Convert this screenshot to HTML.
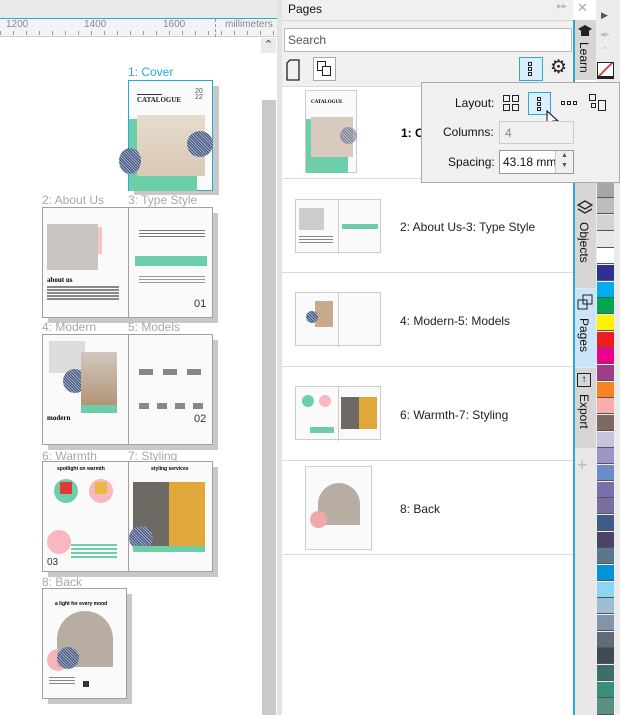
<!DOCTYPE html>
<html><head><meta charset="utf-8"><style>
*{margin:0;padding:0;box-sizing:border-box}
body{width:620px;height:715px;overflow:hidden;background:#fff;font-family:"Liberation Sans",sans-serif;position:relative}
.a{position:absolute}
.lbl{position:absolute;font-size:12px;color:#a8a8a8}
.pg{position:absolute;background:#fafafa;border:1px solid #a0a0a0}
.sh{position:absolute;background:#c8c8c8}
.ln{position:absolute;height:2px;background:#8a8a8a}
.ph{position:absolute;background:#d8cbbd}
.gr{position:absolute;background:#6ccfa9}
.circ{position:absolute;border-radius:50%;background:repeating-linear-gradient(45deg,#3c4f7a 0 1px,#a9b4c8 1px 2px)}
.sep{position:absolute;left:282px;width:291px;height:1px;background:#dcdcdc}
.rt{position:absolute;left:400px;font-size:12px;color:#222}
.sw{position:absolute;left:597px;width:17px;height:16px;border-bottom:1px solid #555}
.vt{position:absolute;writing-mode:vertical-rl;font-size:12px;color:#111}
</style></head><body>
<div class="a" style="left:0;top:0;width:278px;height:18px;background:#e9e9e9"></div>
<div class="a" style="left:0;top:18px;width:278px;height:1px;background:#29a8e0"></div>
<div class="a" style="left:0;top:19px;width:278px;height:18px;background:#f3f3f3;border-bottom:1px solid #d0d0d0"></div>
<div class="a" style="left:6px;top:19px;font-size:10px;color:#888">1200</div>
<div class="a" style="left:84px;top:19px;font-size:10px;color:#888">1400</div>
<div class="a" style="left:163px;top:19px;font-size:10px;color:#888">1600</div>
<div class="a" style="left:225px;top:19px;font-size:10px;color:#888">millimeters</div>
<div class="a" style="left:0;top:31px;width:278px;height:4px;background:repeating-linear-gradient(90deg,#999 0 1px,transparent 1px 13px)"></div>
<div class="a" style="left:215px;top:19px;width:1px;height:18px;border-left:1px dashed #999"></div>
<div class="a" style="left:261px;top:38px;width:15px;height:15px;background:#eaeaea;font-size:11px;text-align:center;color:#333;line-height:15px">&#8963;</div>
<div class="a" style="left:262px;top:100px;width:14px;height:615px;background:#c9c9c9"></div>
<div class="a" style="left:277px;top:0;width:5px;height:715px;background:#e3e3e3"></div>

<div class="lbl" style="left:128px;top:65px;color:#29a8e0">1: Cover</div>
<div class="sh" style="left:134px;top:86px;width:85px;height:109px"></div>
<div class="pg" style="left:128px;top:80px;width:85px;height:111px;border-color:#29a8e0">
 <div class="a" style="left:8px;top:13px;width:25px;height:1px;background:#333"></div>
 <div class="a" style="left:8px;top:15px;font:bold 7px 'Liberation Serif',serif;color:#222">CATALOGUE</div>
 <div class="a" style="left:66px;top:8px;font-size:7px;line-height:6px;color:#555">20<br>22</div>
 <div class="gr" style="left:0;top:38px;width:68px;height:72px"></div>
 <div class="ph" style="left:8px;top:34px;width:68px;height:61px;background:linear-gradient(#e8dccd,#d9c8b5)"></div>
 <div class="circ" style="left:58px;top:50px;width:26px;height:26px"></div>
 <div class="circ" style="left:-10px;top:67px;width:22px;height:26px"></div>
</div>

<div class="lbl" style="left:42px;top:193px">2: About Us</div>
<div class="lbl" style="left:128px;top:193px">3: Type Style</div>
<div class="sh" style="left:48px;top:213px;width:170px;height:110px"></div>
<div class="pg" style="left:42px;top:207px;width:171px;height:111px">
 <div class="ph" style="left:4px;top:16px;width:51px;height:46px;background:#c9c5c0"></div>
 <div class="a" style="left:55px;top:19px;width:4px;height:27px;background:#f7c2c8"></div>
 <div class="a" style="left:4px;top:68px;font:bold 7px 'Liberation Serif',serif">about us</div>
 <div class="ln" style="left:4px;top:78px;width:72px;height:14px;background:repeating-linear-gradient(#888 0 2px,transparent 2px 3px)"></div>
 <div class="a" style="left:85px;top:0;width:1px;height:110px;background:#a0a0a0"></div>
 <div class="gr" style="left:92px;top:48px;width:72px;height:10px"></div>
 <div class="ln" style="left:96px;top:22px;width:66px;height:8px;background:repeating-linear-gradient(#777 0 1px,transparent 1px 3px)"></div>
 <div class="ln" style="left:96px;top:68px;width:66px;height:8px;background:repeating-linear-gradient(#999 0 1px,transparent 1px 3px)"></div>
 <div class="a" style="left:151px;top:90px;font-size:11px;color:#333">01</div>
</div>

<div class="lbl" style="left:42px;top:320px">4: Modern</div>
<div class="lbl" style="left:128px;top:320px">5: Models</div>
<div class="sh" style="left:48px;top:340px;width:170px;height:110px"></div>
<div class="pg" style="left:42px;top:334px;width:171px;height:111px">
 <div class="ph" style="left:6px;top:6px;width:36px;height:32px;background:#ddd"></div>
 <div class="circ" style="left:20px;top:34px;width:24px;height:24px"></div>
 <div class="ph" style="left:38px;top:17px;width:36px;height:55px;background:linear-gradient(#cfc9c0,#b39272)"></div>
 <div class="gr" style="left:38px;top:70px;width:36px;height:8px"></div>
 <div class="a" style="left:4px;top:79px;font:bold 7px 'Liberation Serif',serif">modern</div>
 <div class="a" style="left:85px;top:0;width:1px;height:110px;background:#a0a0a0"></div>
 <div class="ln" style="left:96px;top:34px;width:66px;height:6px;background:repeating-linear-gradient(90deg,#888 0 14px,transparent 14px 24px)"></div>
 <div class="ln" style="left:96px;top:68px;width:66px;height:6px;background:repeating-linear-gradient(90deg,#888 0 10px,transparent 10px 18px)"></div>
 <div class="a" style="left:151px;top:78px;font-size:11px;color:#333">02</div>
</div>

<div class="lbl" style="left:42px;top:449px">6: Warmth</div>
<div class="lbl" style="left:128px;top:449px">7: Styling</div>
<div class="sh" style="left:48px;top:467px;width:170px;height:110px"></div>
<div class="pg" style="left:42px;top:461px;width:171px;height:111px">
 <div class="a" style="left:14px;top:4px;font:bold 5px sans-serif">spotlight on warmth</div>
 <div class="a" style="left:11px;top:17px;width:24px;height:24px;border-radius:50%;background:#6ccfa9"></div>
 <div class="a" style="left:17px;top:20px;width:12px;height:12px;background:#e23a3a"></div>
 <div class="a" style="left:46px;top:17px;width:24px;height:24px;border-radius:50%;background:#f7b8c0"></div>
 <div class="a" style="left:52px;top:20px;width:12px;height:12px;background:#e8b845"></div>
 <div class="a" style="left:4px;top:68px;width:24px;height:24px;border-radius:50%;background:#f7b8c0"></div>
 <div class="gr" style="left:28px;top:82px;width:46px;height:14px;background:repeating-linear-gradient(#6ccfa9 0 2px,transparent 2px 4px)"></div>
 <div class="a" style="left:4px;top:95px;font-size:10px;color:#333">03</div>
 <div class="a" style="left:85px;top:0;width:1px;height:110px;background:#a0a0a0"></div>
 <div class="a" style="left:108px;top:4px;font:bold 5px sans-serif">styling services</div>
 <div class="ph" style="left:90px;top:20px;width:72px;height:64px;background:linear-gradient(90deg,#6e6a63 0 50%,#e0a73a 50%)"></div>
 <div class="circ" style="left:86px;top:64px;width:24px;height:24px"></div>
 <div class="gr" style="left:90px;top:84px;width:72px;height:6px"></div>
</div>

<div class="lbl" style="left:42px;top:575px">8: Back</div>
<div class="sh" style="left:48px;top:594px;width:84px;height:110px"></div>
<div class="pg" style="left:42px;top:588px;width:85px;height:111px">
 <div class="a" style="left:12px;top:12px;font:bold 5px sans-serif">a light for every mood</div>
 <div class="ph" style="left:14px;top:22px;width:56px;height:56px;border-radius:28px 28px 0 0;background:#b8ada3"></div>
 <div class="a" style="left:4px;top:60px;width:22px;height:22px;border-radius:50%;background:#f2a8a8;opacity:.8"></div>
 <div class="circ" style="left:14px;top:58px;width:22px;height:22px"></div>
 <div class="ln" style="left:6px;top:88px;width:26px;height:8px;background:repeating-linear-gradient(#888 0 1px,transparent 1px 3px)"></div>
 <div class="a" style="left:40px;top:92px;width:6px;height:6px;background:#333"></div>
</div>

<div class="a" style="left:282px;top:0;width:291px;height:86px;background:#f0f0f0"></div>
<div class="a" style="left:288px;top:2px;font-size:12px;color:#111">Pages</div>
<div class="a" style="left:557px;top:1px;font-size:10px;color:#bbb">&#9656;&#9656;</div>
<div class="a" style="left:577px;top:0px;font-size:13px;color:#aaa">&#10005;</div>
<div class="a" style="left:282px;top:20px;width:291px;height:1px;background:#d5d5d5"></div>
<div class="a" style="left:284px;top:28px;width:288px;height:24px;background:#fff;border:1px solid #bbb;font-size:12px;color:#555;padding:4px 3px">Search</div>
<svg class="a" style="left:286px;top:59px" width="14" height="22"><path d="M4 1H13V21H1V4Z" fill="none" stroke="#222" stroke-width="1.3"/></svg>
<div class="a" style="left:313px;top:57px;width:23px;height:24px;border:1px solid #aaa;background:#fff"></div>
<div class="a" style="left:317px;top:61px;width:9px;height:10px;border:1.3px solid #222"></div>
<div class="a" style="left:322px;top:66px;width:9px;height:10px;border:1.3px solid #222;background:#fff"></div>
<div class="a" style="left:519px;top:57px;width:24px;height:24px;border:1px solid #29a8e0;background:#dbeefb"></div>
<svg class="a" style="left:527px;top:61px" width="8" height="16"><rect x="1.5" y="1.5" width="3" height="3" fill="none" stroke="#222"/><rect x="1.5" y="6.5" width="3" height="3" fill="none" stroke="#222"/><rect x="1.5" y="11.5" width="3" height="3" fill="none" stroke="#222"/></svg>
<div class="a" style="left:550px;top:56px;font-size:19px;color:#222">&#9881;</div>
<div class="a" style="left:282px;top:86px;width:291px;height:1px;background:#dcdcdc"></div>

<div class="pg" style="left:305px;top:90px;width:52px;height:83px;border-color:#ccc">
 <div class="a" style="left:5px;top:9px;font:bold 5px 'Liberation Serif',serif">CATALOGUE</div>
 <div class="gr" style="left:0;top:28px;width:42px;height:54px"></div>
 <div class="ph" style="left:5px;top:26px;width:42px;height:40px"></div>
 <div class="circ" style="left:34px;top:36px;width:17px;height:17px;opacity:.6"></div>
</div>
<div class="a" style="left:401px;top:126px;font-size:12px;font-weight:bold">1: C</div>
<div class="sep" style="top:178px"></div>
<div class="pg" style="left:295px;top:199px;width:86px;height:54px;border-color:#ccc">
 <div class="ph" style="left:3px;top:8px;width:25px;height:22px;background:#ccc"></div>
 <div class="a" style="left:42px;top:0;width:1px;height:54px;background:#ccc"></div>
 <div class="gr" style="left:46px;top:24px;width:36px;height:5px"></div>
 <div class="ln" style="left:3px;top:36px;width:34px;height:8px;background:repeating-linear-gradient(#888 0 1px,transparent 1px 3px)"></div>
</div>
<div class="rt" style="top:220px">2: About Us-3: Type Style</div>
<div class="sep" style="top:272px"></div>
<div class="pg" style="left:295px;top:292px;width:86px;height:54px;border-color:#ccc">
 <div class="ph" style="left:19px;top:8px;width:18px;height:26px;background:#c7ab8e"></div>
 <div class="circ" style="left:10px;top:18px;width:12px;height:12px"></div>
 <div class="a" style="left:42px;top:0;width:1px;height:54px;background:#ccc"></div>
</div>
<div class="rt" style="top:314px">4: Modern-5: Models</div>
<div class="sep" style="top:366px"></div>
<div class="pg" style="left:295px;top:386px;width:86px;height:54px;border-color:#ccc">
 <div class="a" style="left:6px;top:8px;width:12px;height:12px;border-radius:50%;background:#6ccfa9"></div>
 <div class="a" style="left:23px;top:8px;width:12px;height:12px;border-radius:50%;background:#f7b8c0"></div>
 <div class="a" style="left:42px;top:0;width:1px;height:54px;background:#ccc"></div>
 <div class="ph" style="left:45px;top:10px;width:36px;height:32px;background:linear-gradient(90deg,#6e6a63 0 50%,#e0a73a 50%)"></div>
 <div class="gr" style="left:14px;top:40px;width:24px;height:6px"></div>
</div>
<div class="rt" style="top:408px">6: Warmth-7: Styling</div>
<div class="sep" style="top:460px"></div>
<div class="pg" style="left:305px;top:466px;width:67px;height:84px;border-color:#ccc">
 <div class="ph" style="left:12px;top:16px;width:42px;height:42px;border-radius:21px 21px 0 0;background:#b8ada3"></div>
 <div class="a" style="left:4px;top:44px;width:17px;height:17px;border-radius:50%;background:#f2a8a8"></div>
</div>
<div class="rt" style="top:502px">8: Back</div>
<div class="sep" style="top:554px"></div>

<div class="a" style="left:573px;top:20px;width:2px;height:695px;background:#29a8e0"></div>
<div class="a" style="left:575px;top:20px;width:21px;height:60px;background:#d6d6d6"></div>
<svg class="a" style="left:577px;top:24px" width="16" height="14"><path d="M1 5L8 1L15 5L8 9Z" fill="#222"/><path d="M4 7V12H12V7" fill="#222"/></svg>
<div class="vt" style="left:577px;top:42px">Learn</div>
<div class="a" style="left:575px;top:180px;width:21px;height:535px;background:#e8e8e8"></div>
<div class="a" style="left:575px;top:180px;width:21px;height:108px;background:#d6d6d6"></div>
<svg class="a" style="left:577px;top:200px" width="16" height="16"><path d="M8 1L15 5L8 9L1 5Z M1 9L8 13L15 9" fill="none" stroke="#222" stroke-width="1.3"/></svg>
<div class="vt" style="left:577px;top:222px">Objects</div>
<div class="a" style="left:575px;top:289px;width:21px;height:78px;background:#cce4f7"></div>
<svg class="a" style="left:577px;top:294px" width="16" height="16"><rect x="1" y="6" width="9" height="9" fill="#cce4f7" stroke="#222"/><rect x="6" y="1" width="9" height="9" fill="none" stroke="#222"/></svg>
<div class="vt" style="left:577px;top:318px">Pages</div>
<div class="a" style="left:575px;top:368px;width:21px;height:80px;background:#d6d6d6"></div>
<div class="a" style="left:577px;top:373px;width:14px;height:14px;border:1.5px solid #222;font-size:10px;text-align:center;line-height:11px">&#8593;</div>
<div class="vt" style="left:577px;top:394px">Export</div>
<div class="a" style="left:577px;top:455px;font-size:18px;color:#bbb">+</div>

<div class="a" style="left:596px;top:0;width:24px;height:715px;background:#ececec"></div>
<div class="a" style="left:601px;top:10px;font-size:9px;color:#555">&#9654;</div>
<div class="a" style="left:600px;top:28px;font-size:12px;color:#bbb">&#10002;</div>
<div class="a" style="left:601px;top:46px;font-size:10px;color:#ccc">&#8963;</div>
<div class="a" style="left:597px;top:62px;width:17px;height:17px;background:linear-gradient(135deg,#fff 45%,#e33 45%,#e33 55%,#fff 55%);border:1px solid #222;border-bottom:3px solid #222"></div>

<div class="a" style="left:421px;top:82px;width:199px;height:101px;background:#f0f0f0;border:1px solid #aaa"></div>
<div class="a" style="left:455px;top:96px;font-size:12px;color:#111">Layout:</div>
<svg class="a" style="left:503px;top:95px" width="18" height="18"><rect x="0.5" y="0.5" width="6" height="6" fill="none" stroke="#222"/><rect x="9.5" y="0.5" width="6" height="6" fill="none" stroke="#222"/><rect x="0.5" y="9.5" width="6" height="6" fill="none" stroke="#222"/><rect x="9.5" y="9.5" width="6" height="6" fill="none" stroke="#222"/></svg>
<div class="a" style="left:528px;top:92px;width:23px;height:23px;border:1px solid #29a8e0;background:#dbeefb"></div>
<svg class="a" style="left:536px;top:96px" width="8" height="16"><rect x="1.5" y="1.5" width="3" height="3" fill="none" stroke="#222"/><rect x="1.5" y="6.5" width="3" height="3" fill="none" stroke="#222"/><rect x="1.5" y="11.5" width="3" height="3" fill="none" stroke="#222"/></svg>
<svg class="a" style="left:560px;top:100px" width="18" height="8"><rect x="1.5" y="1.5" width="3" height="3" fill="none" stroke="#222"/><rect x="7.5" y="1.5" width="3" height="3" fill="none" stroke="#222"/><rect x="13.5" y="1.5" width="3" height="3" fill="none" stroke="#222"/></svg>
<svg class="a" style="left:589px;top:94px" width="18" height="18"><rect x="0.5" y="0.5" width="6" height="6" fill="none" stroke="#222"/><rect x="2.5" y="9.5" width="4" height="4" fill="none" stroke="#222"/><rect x="9.5" y="6.5" width="7" height="10" fill="none" stroke="#222"/></svg>
<svg class="a" style="left:546px;top:110px" width="14" height="20"><path d="M1 1V15L4.5 12L7 18L9.5 17L7 11H12Z" fill="#fff" stroke="#000"/></svg>
<div class="a" style="left:443px;top:125px;font-size:12px;color:#111">Columns:</div>
<div class="a" style="left:499px;top:121px;width:75px;height:23px;border:1px solid #ccc;background:#f0f0f0;font-size:12px;color:#888;padding:4px 5px">4</div>
<div class="a" style="left:448px;top:155px;font-size:12px;color:#111">Spacing:</div>
<div class="a" style="left:499px;top:150px;width:75px;height:24px;border:1px solid #999;background:#fff;font-size:12px;color:#111;padding:4px 3px;white-space:nowrap;overflow:hidden">43.18 mm</div>
<div class="a" style="left:555px;top:151px;width:18px;height:22px;background:#f0f0f0;border-left:1px solid #ccc;font-size:7px;color:#555;text-align:center;line-height:10px">&#9650;<br>&#9660;</div>

<div class="sw" style="top:182px;background:#a7a7a7"></div>
<div class="sw" style="top:198px;background:#bdbdbd"></div>
<div class="sw" style="top:215px;background:#d3d3d3"></div>
<div class="sw" style="top:232px;background:#e8e8e8"></div>
<div class="sw" style="top:248px;background:#ffffff"></div>
<div class="sw" style="top:265px;background:#2e3192"></div>
<div class="sw" style="top:282px;background:#00aeef"></div>
<div class="sw" style="top:298px;background:#00a651"></div>
<div class="sw" style="top:315px;background:#fff200"></div>
<div class="sw" style="top:332px;background:#ed1c24"></div>
<div class="sw" style="top:348px;background:#ec008c"></div>
<div class="sw" style="top:365px;background:#9e3e86"></div>
<div class="sw" style="top:382px;background:#f7841e"></div>
<div class="sw" style="top:398px;background:#f9adad"></div>
<div class="sw" style="top:415px;background:#7d6b63"></div>
<div class="sw" style="top:432px;background:#c5c3de"></div>
<div class="sw" style="top:448px;background:#9b95c8"></div>
<div class="sw" style="top:465px;background:#6a8cc7"></div>
<div class="sw" style="top:482px;background:#7b6faa"></div>
<div class="sw" style="top:498px;background:#7c6fa0"></div>
<div class="sw" style="top:515px;background:#3e5a86"></div>
<div class="sw" style="top:532px;background:#4a4566"></div>
<div class="sw" style="top:548px;background:#5e7590"></div>
<div class="sw" style="top:565px;background:#0095d9"></div>
<div class="sw" style="top:582px;background:#8cd5f5"></div>
<div class="sw" style="top:598px;background:#9ebfd3"></div>
<div class="sw" style="top:615px;background:#8095a8"></div>
<div class="sw" style="top:632px;background:#5f6c77"></div>
<div class="sw" style="top:648px;background:#3f4a53"></div>
<div class="sw" style="top:665px;background:#3d6e6a"></div>
<div class="sw" style="top:682px;background:#3a8f7a"></div>
<div class="sw" style="top:698px;background:#5b8f85;height:17px"></div>
</body></html>
